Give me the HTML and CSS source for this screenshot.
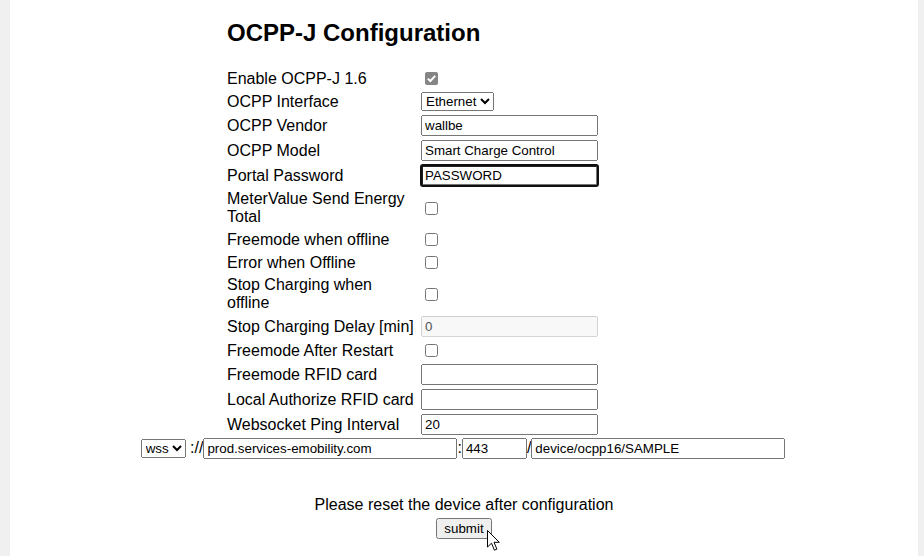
FILE: index.html
```html
<!DOCTYPE html>
<html>
<head>
<meta charset="utf-8">
<title>OCPP-J Configuration</title>
<link rel="stylesheet" href="styles.css">
</head>
<body>
<div class="page">
  <div class="panel">
    <h2 class="title">OCPP-J Configuration</h2>
    <table class="cfg">
      <tr><td class="lbl">Enable OCPP-J 1.6</td><td><input type="checkbox" class="chk chk-on" checked disabled></td></tr>
      <tr><td class="lbl">OCPP Interface</td><td><select><option>Ethernet</option></select></td></tr>
      <tr><td class="lbl">OCPP Vendor</td><td><input type="text" class="txt" value="wallbe"></td></tr>
      <tr><td class="lbl">OCPP Model</td><td><input type="text" class="txt" value="Smart Charge Control"></td></tr>
      <tr><td class="lbl">Portal Password</td><td><input type="text" class="txt focused" value="PASSWORD"></td></tr>
      <tr><td class="lbl">MeterValue Send Energy Total</td><td><input type="checkbox" class="chk"></td></tr>
      <tr><td class="lbl">Freemode when offline</td><td><input type="checkbox" class="chk"></td></tr>
      <tr><td class="lbl">Error when Offline</td><td><input type="checkbox" class="chk"></td></tr>
      <tr><td class="lbl">Stop Charging when offline</td><td><input type="checkbox" class="chk"></td></tr>
      <tr><td class="lbl">Stop Charging Delay [min]</td><td><input type="text" class="txt" value="0" disabled></td></tr>
      <tr><td class="lbl">Freemode After Restart</td><td><input type="checkbox" class="chk"></td></tr>
      <tr><td class="lbl">Freemode RFID card</td><td><input type="text" class="txt" value=""></td></tr>
      <tr><td class="lbl">Local Authorize RFID card</td><td><input type="text" class="txt" value=""></td></tr>
      <tr><td class="lbl">Websocket Ping Interval</td><td><input type="text" class="txt" value="20"></td></tr>
    </table>
  </div>
  <div class="url-row"><select><option>wss</option></select> ://<input type="text" class="host" value="prod.services-emobility.com">:<input type="text" class="port" value="443">/<input type="text" class="path" value="device/ocpp16/SAMPLE"></div>
  <p class="note">Please reset the device after configuration</p>
  <div class="actions">
    <button type="button" class="submit">submit</button>
    <svg class="cursor" width="14" height="22" viewBox="0 0 14 22" aria-hidden="true">
      <path d="M0.5 0.5 L0.5 17 L4.5 13.2 L7.4 20.2 L9.9 19.1 L7 12.3 L12.3 12.3 Z" fill="#fff" stroke="#000" stroke-width="1" stroke-linejoin="miter"/>
    </svg>
  </div>
</div>
</body>
</html>
```
FILE: styles.css
```css
html, body {
  margin: 0;
  padding: 0;
}
body {
  background: #f0f0f0;
  font-family: "Liberation Sans", Arial, sans-serif;
  font-size: 16px;
  color: #000;
}
.page {
  margin-left: 10px;
  width: 908px;
  min-height: 556px;
  background: #fff;
  display: flex;
  flex-direction: column;
  align-items: center;
}
.panel {
  width: 480px;
  padding-top: 1px;
}
.title {
  font-size: 24px;
  font-weight: bold;
  margin: 18px 0 19px 3px;
}
.cfg {
  border-spacing: 2px;
}
.cfg td {
  padding: 1px;
}
.lbl {
  width: 190px;
}
input, select, button {
  font-family: "Liberation Sans", Arial, sans-serif;
  font-size: 13.333px;
}
.chk {
  display: block;
  width: 13px;
  height: 13px;
  margin: 3px 3px 3px 4px;
}
.chk-on {
  appearance: none;
  -webkit-appearance: none;
  box-sizing: border-box;
  border-radius: 2px;
  background-color: #858585;
  background-image: url("data:image/svg+xml,%3Csvg xmlns='http://www.w3.org/2000/svg' width='13' height='13' viewBox='0 0 13 13'%3E%3Cpath d='M2.8 6.6 L5.3 9 L10.2 3.9' fill='none' stroke='%23fff' stroke-width='2'/%3E%3C/svg%3E");
  background-repeat: no-repeat;
}
.txt {
  width: 177px;
  box-sizing: border-box;
  height: 21px;
}
.focused {
  outline: 2px solid #101010;
  outline-offset: -1px;
  border-radius: 2px;
}
.url-row {
  white-space: nowrap;
  margin-left: -2px;
}
.url-row input {
  box-sizing: border-box;
  height: 21px;
}
.host { width: 254px; }
.port { width: 65px; }
.path { width: 254px; }
.note {
  margin: 37px 0 0;
}
.actions {
  position: relative;
  margin-top: 4px;
}
.submit {
  height: 21px;
  padding: 1px 6px;
}
.cursor {
  position: absolute;
  left: 51px;
  top: 12px;
}
```
